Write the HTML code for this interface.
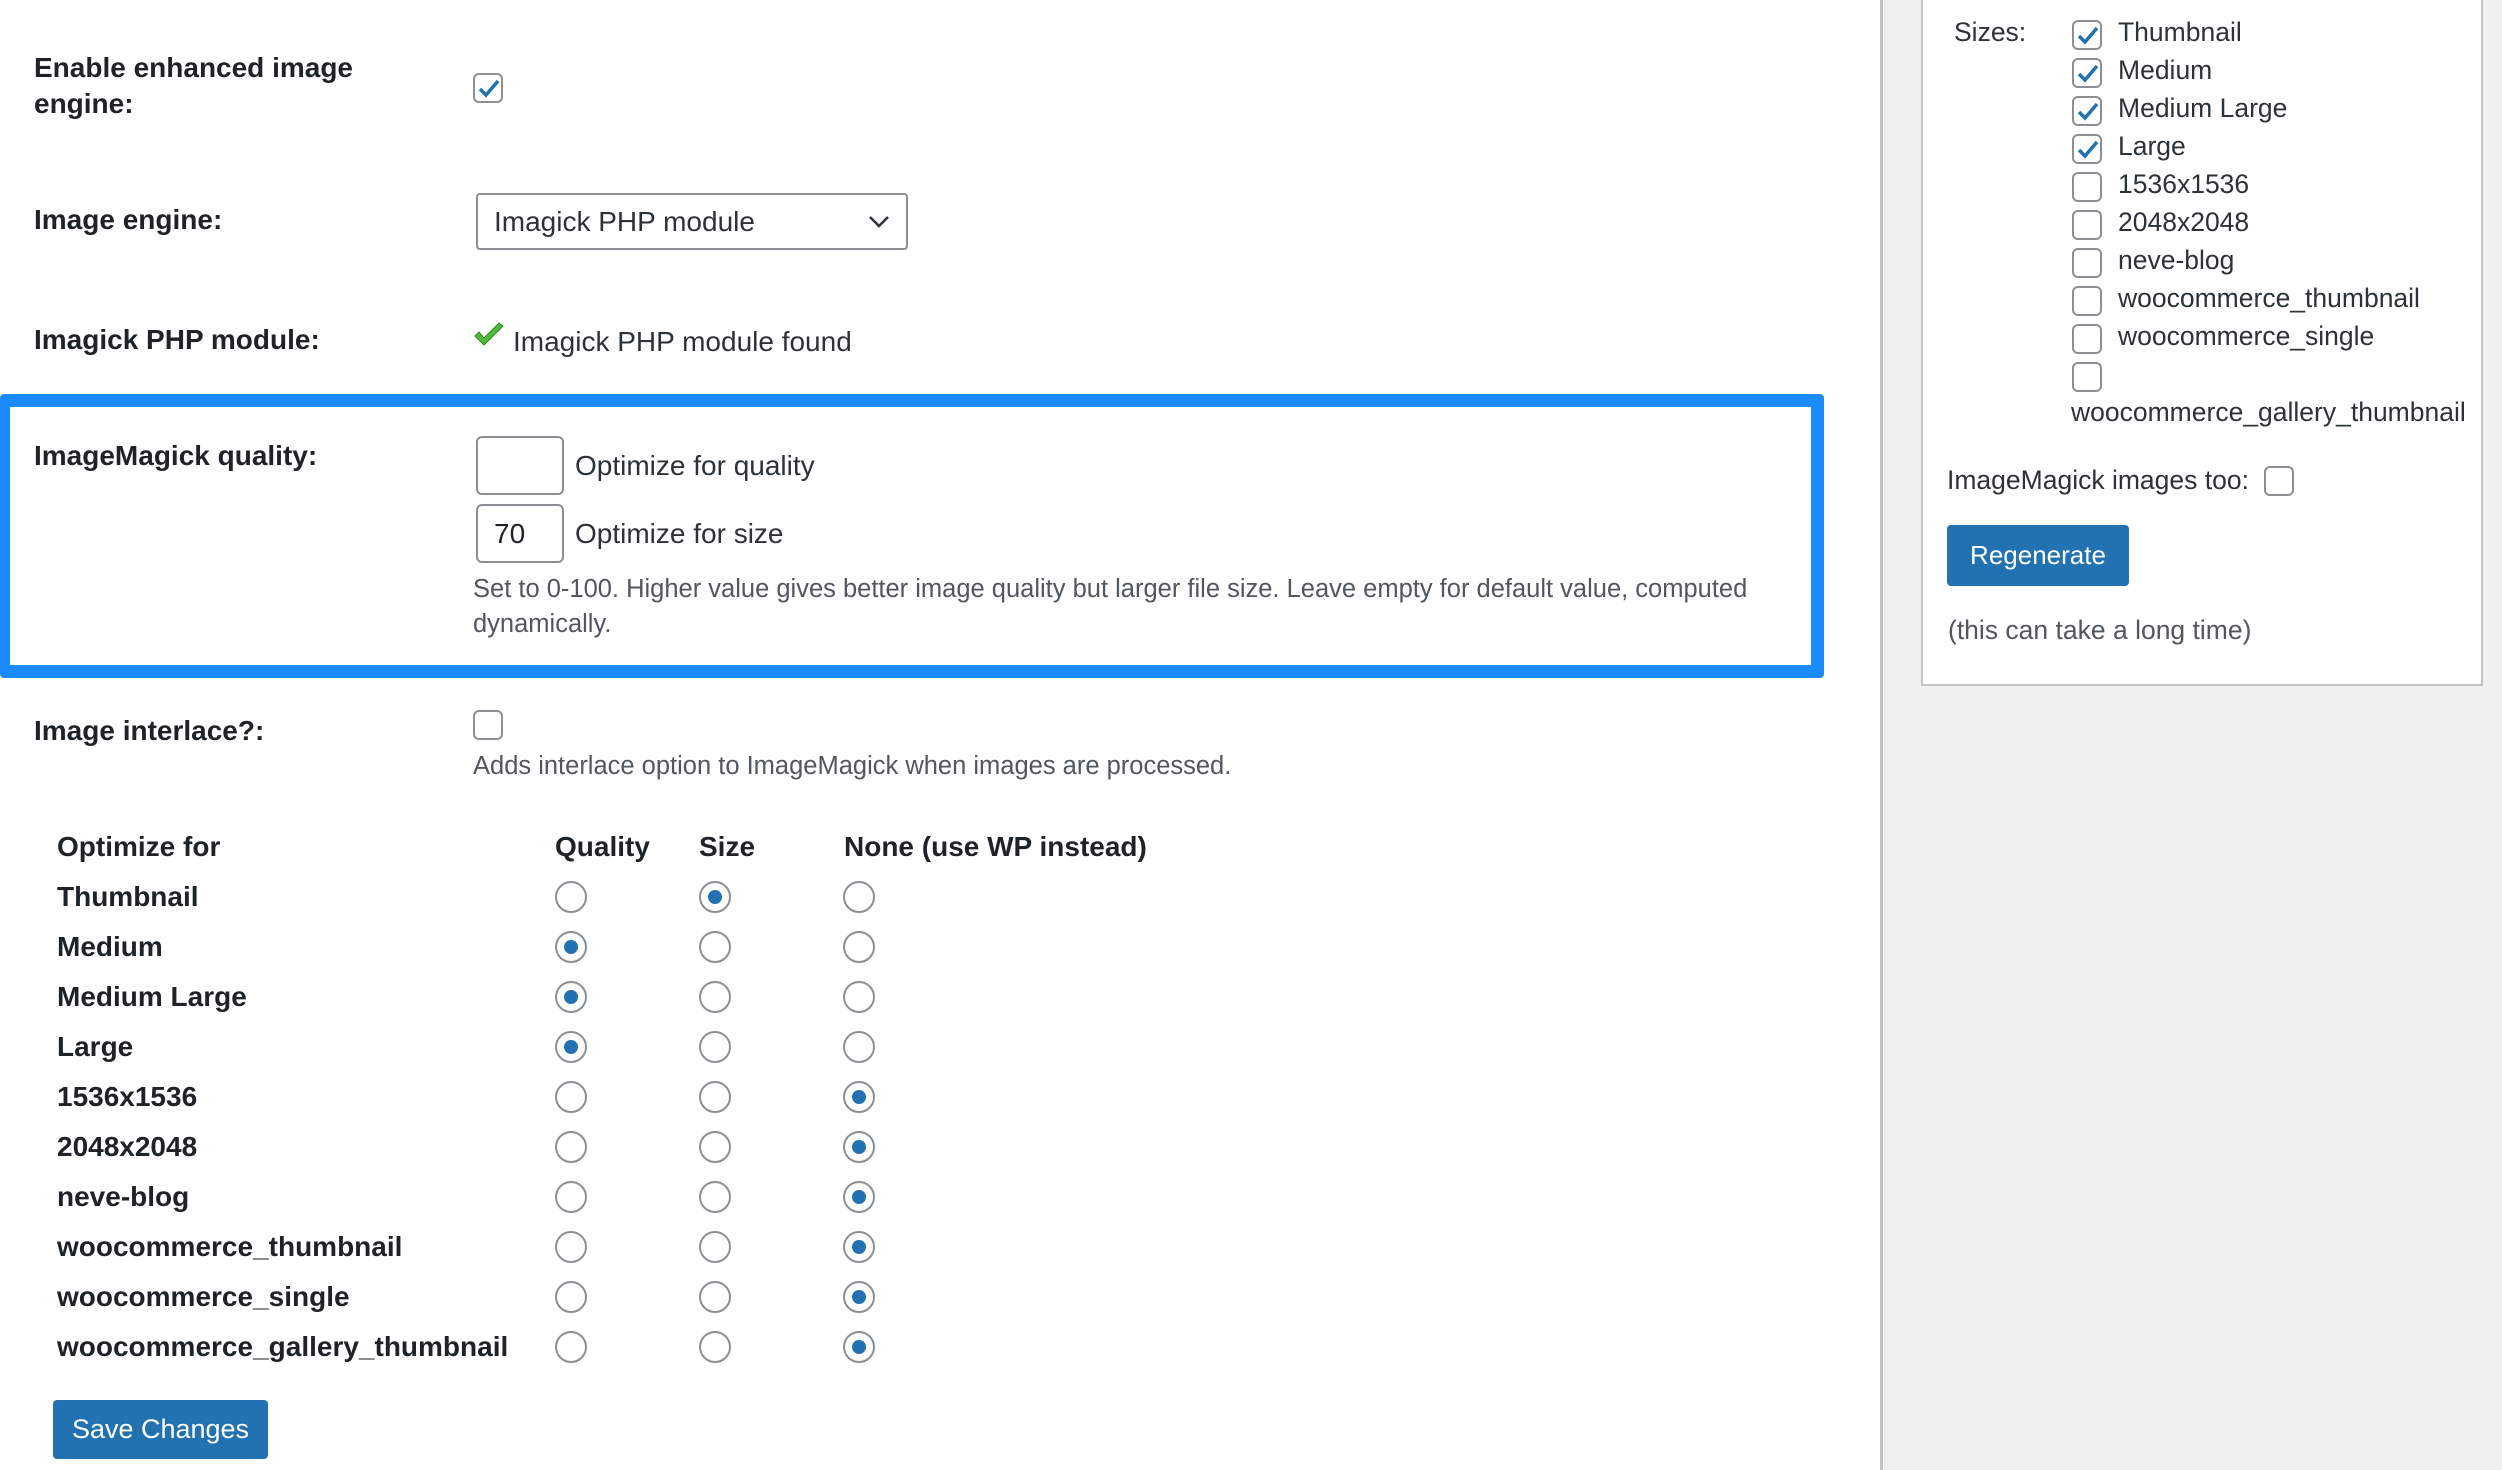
<!DOCTYPE html>
<html><head><meta charset="utf-8"><style>
*{box-sizing:border-box;margin:0;padding:0}
body{width:2502px;height:1470px;position:relative;background:#fff;font-family:"Liberation Sans",Arial,sans-serif;color:#1d2327;overflow:hidden}
.a{position:absolute;white-space:nowrap}
.lb{font-weight:bold;font-size:28px;line-height:36px}
.t{font-size:28px;line-height:36px;color:#2c3338}
.cb{position:absolute;width:30px;height:30px;border:2px solid #8c8f94;border-radius:6px;background:#fff}
.cb svg{position:absolute;left:2px;top:3px}
.rd{position:absolute;width:32px;height:32px;border:2px solid #8c8f94;border-radius:50%;background:#fff}
.rd.on::after{content:"";position:absolute;left:7px;top:7px;width:14px;height:14px;border-radius:50%;background:#2271b1}
.row{position:absolute;left:57px;font-weight:bold;font-size:28px;line-height:36px}
.in{position:absolute;left:476px;width:88px;height:59px;border:2px solid #8c8f94;border-radius:6px;background:#fff;font-size:28px;padding:12px 0 0 16px}
.desc{font-size:25.5px;line-height:35px;color:#50575e}
.st{font-size:26.5px;line-height:32px;color:#2c3338}
</style></head><body>
<div class="a" style="left:1880px;top:0;width:622px;height:1470px;background:#f0f0f1;border-left:3px solid #c3c4c7"></div>
<div class="a" style="left:1921px;top:-4px;width:562px;height:690px;background:#fff;border:2px solid #c3c4c7"></div>

<div class="a lb" style="left:34px;top:50px;line-height:36px">Enable enhanced image<br>engine:</div>
<div class="cb" style="left:473px;top:73px"><svg width="24" height="22" viewBox="0 0 24 22"><path d="M3 11 L9 17 L21 3" stroke="#2271b1" stroke-width="3.5" fill="none"/></svg></div>

<div class="a lb" style="left:34px;top:202px">Image engine:</div>
<div class="a" style="left:476px;top:193px;width:432px;height:57px;border:2px solid #8c8f94;border-radius:4px;font-size:28px;padding:11px 0 0 16px;color:#2c3338">Imagick PHP module
<svg style="position:absolute;right:16px;top:20px" width="22" height="14" viewBox="0 0 22 14"><path d="M2 2 L11 11 L20 2" stroke="#2c3338" stroke-width="2.5" fill="none"/></svg></div>

<div class="a lb" style="left:34px;top:322px">Imagick PHP module:</div>
<svg class="a" style="left:473px;top:322px" width="32" height="26" viewBox="0 0 32 26"><path d="M2 14 L11 23 L30 4 L26 1 L11 16 L6 10 Z" fill="#4cbb3a" stroke="#2f8a22" stroke-width="1"/></svg>
<div class="a t" style="left:513px;top:324px">Imagick PHP module found</div>

<div class="a" style="left:0;top:394px;width:1824px;height:284px;border:13px solid #1a8cff;border-left-width:10px;border-radius:4px"></div>
<div class="a lb" style="left:34px;top:438px">ImageMagick quality:</div>
<div class="in" style="top:436px"></div>
<div class="a t" style="left:575px;top:448px">Optimize for quality</div>
<div class="in" style="top:504px">70</div>
<div class="a t" style="left:575px;top:516px">Optimize for size</div>
<div class="a desc" style="left:473px;top:572px">Set to 0-100. Higher value gives better image quality but larger file size. Leave empty for default value, computed<br>dynamically.</div>

<div class="a lb" style="left:34px;top:713px">Image interlace?:</div>
<div class="cb" style="left:473px;top:710px"></div>
<div class="a desc" style="left:473px;top:749px">Adds interlace option to ImageMagick when images are processed.</div>

<div class="row" style="top:829px">Optimize for</div>
<div class="row" style="left:555px;top:829px">Quality</div>
<div class="row" style="left:699px;top:829px">Size</div>
<div class="row" style="left:844px;top:829px">None (use WP instead)</div>

<div class="row" style="top:879px">Thumbnail</div>
<div class="rd" style="left:555px;top:881px"></div><div class="rd on" style="left:699px;top:881px"></div><div class="rd" style="left:843px;top:881px"></div>
<div class="row" style="top:929px">Medium</div>
<div class="rd on" style="left:555px;top:931px"></div><div class="rd" style="left:699px;top:931px"></div><div class="rd" style="left:843px;top:931px"></div>
<div class="row" style="top:979px">Medium Large</div>
<div class="rd on" style="left:555px;top:981px"></div><div class="rd" style="left:699px;top:981px"></div><div class="rd" style="left:843px;top:981px"></div>
<div class="row" style="top:1029px">Large</div>
<div class="rd on" style="left:555px;top:1031px"></div><div class="rd" style="left:699px;top:1031px"></div><div class="rd" style="left:843px;top:1031px"></div>
<div class="row" style="top:1079px">1536x1536</div>
<div class="rd" style="left:555px;top:1081px"></div><div class="rd" style="left:699px;top:1081px"></div><div class="rd on" style="left:843px;top:1081px"></div>
<div class="row" style="top:1129px">2048x2048</div>
<div class="rd" style="left:555px;top:1131px"></div><div class="rd" style="left:699px;top:1131px"></div><div class="rd on" style="left:843px;top:1131px"></div>
<div class="row" style="top:1179px">neve-blog</div>
<div class="rd" style="left:555px;top:1181px"></div><div class="rd" style="left:699px;top:1181px"></div><div class="rd on" style="left:843px;top:1181px"></div>
<div class="row" style="top:1229px">woocommerce_thumbnail</div>
<div class="rd" style="left:555px;top:1231px"></div><div class="rd" style="left:699px;top:1231px"></div><div class="rd on" style="left:843px;top:1231px"></div>
<div class="row" style="top:1279px">woocommerce_single</div>
<div class="rd" style="left:555px;top:1281px"></div><div class="rd" style="left:699px;top:1281px"></div><div class="rd on" style="left:843px;top:1281px"></div>
<div class="row" style="top:1329px">woocommerce_gallery_thumbnail</div>
<div class="rd" style="left:555px;top:1331px"></div><div class="rd" style="left:699px;top:1331px"></div><div class="rd on" style="left:843px;top:1331px"></div>

<div class="a" style="left:53px;top:1400px;width:215px;height:59px;background:#2271b1;border-radius:4px;color:#fff;font-size:27px;text-align:center;line-height:59px">Save Changes</div>

<div class="a st" style="left:1954px;top:16px">Sizes:</div>
<div class="cb" style="left:2072px;top:20px"><svg width="24" height="22" viewBox="0 0 24 22"><path d="M3 11 L9 17 L21 3" stroke="#2271b1" stroke-width="3.5" fill="none"/></svg></div>
<div class="a st" style="left:2118px;top:16px">Thumbnail</div>
<div class="cb" style="left:2072px;top:58px"><svg width="24" height="22" viewBox="0 0 24 22"><path d="M3 11 L9 17 L21 3" stroke="#2271b1" stroke-width="3.5" fill="none"/></svg></div>
<div class="a st" style="left:2118px;top:54px">Medium</div>
<div class="cb" style="left:2072px;top:96px"><svg width="24" height="22" viewBox="0 0 24 22"><path d="M3 11 L9 17 L21 3" stroke="#2271b1" stroke-width="3.5" fill="none"/></svg></div>
<div class="a st" style="left:2118px;top:92px">Medium Large</div>
<div class="cb" style="left:2072px;top:134px"><svg width="24" height="22" viewBox="0 0 24 22"><path d="M3 11 L9 17 L21 3" stroke="#2271b1" stroke-width="3.5" fill="none"/></svg></div>
<div class="a st" style="left:2118px;top:130px">Large</div>
<div class="cb" style="left:2072px;top:172px"></div><div class="a st" style="left:2118px;top:168px">1536x1536</div>
<div class="cb" style="left:2072px;top:210px"></div><div class="a st" style="left:2118px;top:206px">2048x2048</div>
<div class="cb" style="left:2072px;top:248px"></div><div class="a st" style="left:2118px;top:244px">neve-blog</div>
<div class="cb" style="left:2072px;top:286px"></div><div class="a st" style="left:2118px;top:282px">woocommerce_thumbnail</div>
<div class="cb" style="left:2072px;top:324px"></div><div class="a st" style="left:2118px;top:320px">woocommerce_single</div>
<div class="cb" style="left:2072px;top:362px"></div>
<div class="a st" style="left:2071px;top:396px">woocommerce_gallery_thumbnail</div>

<div class="a st" style="left:1947px;top:464px">ImageMagick images too:</div>
<div class="cb" style="left:2264px;top:466px"></div>
<div class="a" style="left:1947px;top:525px;width:182px;height:61px;background:#2271b1;border-radius:4px;color:#fff;font-size:26px;text-align:center;line-height:61px">Regenerate</div>
<div class="a st" style="left:1948px;top:614px;color:#50575e">(this can take a long time)</div>
</body></html>
